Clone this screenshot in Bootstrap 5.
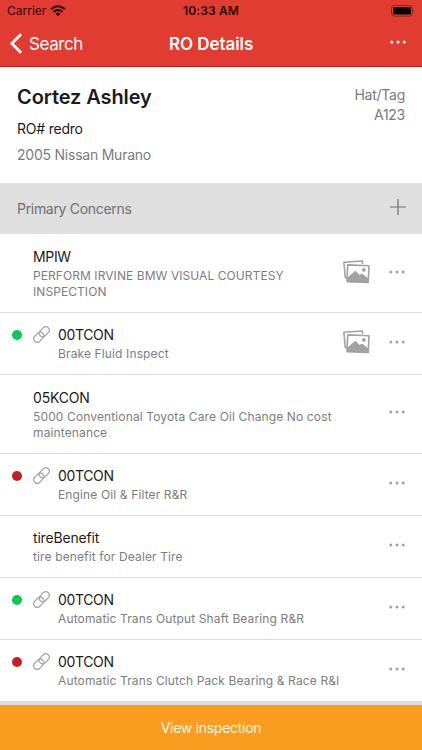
<!DOCTYPE html>
<html lang="en">
<head>
<meta charset="utf-8">
<meta name="viewport" content="width=device-width, initial-scale=1">
<title>RO Details</title>
<link href="https://cdn.jsdelivr.net/npm/bootstrap@5.3.0/dist/css/bootstrap.min.css" rel="stylesheet">
<style>
body{font-family:Inter,"Liberation Sans",sans-serif;color:#1b1b1b;height:750px;background:#fff;overflow:hidden}
svg{display:block;flex:none}
.app-top{background:#e03c32;height:67px;border-bottom:1px solid #b5202a}
.status-line{height:22px;color:#2b0706;font-size:12px;padding:0 7px;display:grid;grid-template-columns:1fr auto 1fr}
.clock{letter-spacing:.15px}
.title-line{height:43px;padding:0 16px 0 10px;display:grid;grid-template-columns:159px auto 1fr}
.back-link{color:#fff;font-size:17px;line-height:22px;gap:7px;letter-spacing:-.4px}
.screen-title{font-size:17px;font-weight:600;line-height:22px;letter-spacing:-.06px}
.summary{height:116px;padding:18px 17px 0}
.cust{font-size:20px;font-weight:600;line-height:24px;letter-spacing:-.1px}
.ro{font-size:14px;line-height:18px;margin-top:11px;letter-spacing:-.22px}
.muted{color:#7b7b7b;font-size:14px;line-height:18px;letter-spacing:-.23px}
.tag-text{color:#7b7b7b;font-size:14px;line-height:20px;letter-spacing:-.26px}
.section-bar{background:#dfdfdf;height:51px;padding:0 16px 0 17px;color:#707070;font-size:14px;letter-spacing:-.31px}
.line-item{height:62px;border-bottom:1px solid #dedede;padding:13px 17px 0 33px;position:relative}
.line-item.tall{height:79px;padding-top:14px}
.line-item:last-child{height:61px;border:0}
.job{font-size:14px;line-height:18px;letter-spacing:-.35px}
.job.wide{letter-spacing:-.18px}
.desc{font-size:12px;line-height:16px;color:#7d7d7d;margin-top:2px;letter-spacing:.13px}
.desc.caps{letter-spacing:.07px}
.status-dot{width:10px;height:10px;border-radius:50%;position:absolute;left:12px;top:17px}
.ok{background:#07c953}.bad{background:#c31f27}
.chain{margin:0 8px 0 0}
.actions{color:#a2a2a2;gap:19px;height:30px;margin-top:1px}
.tall .actions{margin-top:8px}
.tall:first-child .actions{margin-top:9px}
.bottom-gap{background:#dfdfdf;height:4px}
.cta{background:#f99d20;height:45px;color:#fff5e0;font-size:14px;border-radius:0;letter-spacing:-.27px}
</style>
</head>
<body>
<svg width="0" height="0" class="position-absolute">
<symbol id="dots" viewBox="0 0 16 4"><g fill="currentColor"><circle cx="1.8" cy="2" r="1.5"/><circle cx="8" cy="2" r="1.5"/><circle cx="14.2" cy="2" r="1.5"/></g></symbol>
<symbol id="chain" viewBox="0 0 17 17"><g fill="none" stroke="#a5a5a5" stroke-width="1.2" transform="rotate(-45 8.5 8.5)"><rect x="-1" y="5" width="11.3" height="7" rx="3.5"/><rect x="6.7" y="5" width="11.3" height="7" rx="3.5"/></g></symbol>
<symbol id="photos" viewBox="0 0 27 24"><g fill="none" stroke="#a2a2a2" stroke-width="1.6" stroke-linejoin="round"><path d="M4 17.5 2.3 17.6 .9 2.2 19.3 1 19.6 4"/><path d="M4.7 4.9 26 5.8 25.2 22.4 4 21.6Z"/></g><path d="M4 21.6V18L8.5 14 12.5 10.8 16.5 15 19 13.4 25.4 18.6V22.4Z" fill="#a2a2a2"/><circle cx="20.8" cy="9.8" r="1.9" fill="#a2a2a2"/></symbol>
</svg>
<header class="app-top text-white">
<div class="status-line align-items-center">
<div class="d-flex align-items-center"><span>Carrier</span>
<svg class="ms-1" width="16" height="12" viewBox="0 0 16 12"><g fill="none" stroke="#2b0706" stroke-width="2"><path d="M1 4.3Q8-1.8 15 4.3M3.5 7Q8 3 12.5 7"/></g><path d="M5.4 8.5Q8 6.7 10.6 8.5L8 11.2Z" fill="#2b0706"/></svg></div>
<span class="fw-semibold clock">10:33 AM</span>
<svg class="ms-auto" width="25" height="12" viewBox="0 0 25 12"><rect x="1.5" y=".5" width="21" height="10.6" rx="2.8" fill="none" stroke="#8c231d"/><rect x="3" y="2" width="18" height="7.6" rx="1.4" fill="#090000"/><path d="M23.6 4Q25 5.7 23.6 7.5Z" fill="#8c231d"/></svg>
</div>
<div class="title-line align-items-center">
<a href="#" class="back-link text-decoration-none d-flex align-items-center"><svg width="12" height="21" viewBox="0 0 12 21"><path d="M11 1.2 1.8 10.5 11 19.8" fill="none" stroke="#fff" stroke-width="2.8"/></svg><span>Search</span></a>
<div class="screen-title">RO Details</div>
<svg class="ms-auto mb-1" width="16" height="4"><use href="#dots"/></svg>
</div>
</header>
<section class="summary d-flex justify-content-between">
<div><div class="cust">Cortez Ashley</div><div class="ro">RO# redro</div><div class="muted mt-2"><span>2005 Nissan Murano</span></div></div>
<div class="tag-text text-end">Hat/Tag<br>A123</div>
</section>
<div class="section-bar d-flex align-items-center justify-content-between"><span>Primary Concerns</span><svg width="16" height="16" class="mb-1"><path d="M8 0V16M0 8H16" stroke="#707070" stroke-width="1.2"/></svg></div>
<main>
<div class="line-item tall d-flex justify-content-between"><div><div class="job">MPIW</div><div class="desc caps">PERFORM IRVINE BMW VISUAL COURTESY<br>INSPECTION</div></div><div class="actions d-flex align-items-center"><svg width="27" height="24"><use href="#photos"/></svg><svg width="16" height="4"><use href="#dots"/></svg></div></div>
<div class="line-item d-flex"><i class="status-dot ok"></i><svg class="chain" width="17" height="17"><use href="#chain"/></svg><div><div class="job">00TCON</div><div class="desc">Brake Fluid Inspect</div></div><div class="actions d-flex align-items-center ms-auto"><svg width="27" height="24"><use href="#photos"/></svg><svg width="16" height="4"><use href="#dots"/></svg></div></div>
<div class="line-item tall d-flex justify-content-between"><div><div class="job wide">05KCON</div><div class="desc">5000 Conventional Toyota Care Oil Change No cost<br>maintenance</div></div><div class="actions d-flex align-items-center"><svg width="16" height="4"><use href="#dots"/></svg></div></div>
<div class="line-item d-flex"><i class="status-dot bad"></i><svg class="chain" width="17" height="17"><use href="#chain"/></svg><div><div class="job">00TCON</div><div class="desc">Engine Oil &amp; Filter R&amp;R</div></div><div class="actions d-flex align-items-center ms-auto"><svg width="16" height="4"><use href="#dots"/></svg></div></div>
<div class="line-item d-flex justify-content-between"><div><div class="job wide">tireBenefit</div><div class="desc">tire benefit for Dealer Tire</div></div><div class="actions d-flex align-items-center"><svg width="16" height="4"><use href="#dots"/></svg></div></div>
<div class="line-item d-flex"><i class="status-dot ok"></i><svg class="chain" width="17" height="17"><use href="#chain"/></svg><div><div class="job">00TCON</div><div class="desc">Automatic Trans Output Shaft Bearing R&amp;R</div></div><div class="actions d-flex align-items-center ms-auto"><svg width="16" height="4"><use href="#dots"/></svg></div></div>
<div class="line-item d-flex"><i class="status-dot bad"></i><svg class="chain" width="17" height="17"><use href="#chain"/></svg><div><div class="job">00TCON</div><div class="desc">Automatic Trans Clutch Pack Bearing &amp; Race R&amp;I</div></div><div class="actions d-flex align-items-center ms-auto"><svg width="16" height="4"><use href="#dots"/></svg></div></div>
</main>
<div class="bottom-gap"></div>
<button type="button" class="cta btn w-100 border-0 p-0">View inspection</button>
</body>
</html>
